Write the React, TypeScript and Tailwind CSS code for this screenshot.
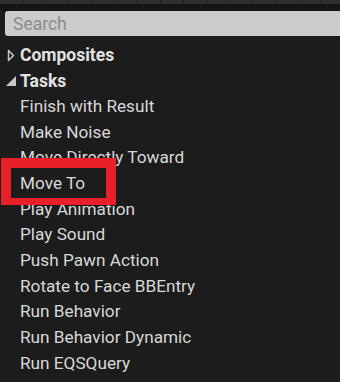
import React from "react";

const items = [
  "Finish with Result",
  "Make Noise",
  "Move Directly Toward",
  "Move To",
  "Play Animation",
  "Play Sound",
  "Push Pawn Action",
  "Rotate to Face BBEntry",
  "Run Behavior",
  "Run Behavior Dynamic",
  "Run EQSQuery",
];

export default function App() {
  return (
    <div className="relative w-[340px] h-[382px] overflow-hidden bg-[#1c1c1c] text-[#dcdcdc]" style={{ fontFamily: "Roboto, 'Noto Sans', sans-serif" }}>
      {/* top strip */}
      <div className="h-[4px] bg-[#2e2e2e] flex">
        {Array.from({ length: 15 }).map((_, i) => (
          <div key={i} className="w-[23px] h-full border-r border-[#1e1e1e] shrink-0" />
        ))}
      </div>
      <div className="h-[7px] bg-[#161616]" />
      {/* search */}
      <div className="pl-[5px]">
        <div className="h-[25px] bg-[#cbcbcb] rounded-l-[3px] flex items-center pl-[8px] pt-[2px] text-[17.5px] text-[#8c8c8c]">
          Search
        </div>
      </div>
      {/* tree */}
      <div className="flex flex-col pt-[6px]">
        <div className="h-[26px] flex items-center pl-[7px] gap-[5px]">
          <svg width="8" height="13" viewBox="0 0 8 13">
            <path d="M1.5 1.5 L6.5 6.5 L1.5 11.5 Z" fill="none" stroke="#c8c8c8" strokeWidth="1.5" strokeLinejoin="round" />
          </svg>
          <span className="text-[17.5px] font-bold text-[#e2e2e2]">Composites</span>
        </div>
        <div className="h-[26px] flex items-center pl-[6px] gap-[4px]">
          <svg width="10" height="12" viewBox="0 0 10 12">
            <path d="M10 1 L10 11 L0 11 Z" fill="#c8c8c8" />
          </svg>
          <span className="text-[17.5px] font-bold text-[#e2e2e2]">Tasks</span>
        </div>
        {items.map((t) => (
          <div key={t} className="h-[25.7px] flex items-center pl-[20px] text-[17.2px] text-[#d8d8d8] whitespace-nowrap">
            {t}
          </div>
        ))}
      </div>
      {/* red highlight */}
      <div className="absolute left-[1px] top-[158px] w-[115px] h-[47px] border-[10px] border-b-[7px] border-[#e8202a]" />
    </div>
  );
}
